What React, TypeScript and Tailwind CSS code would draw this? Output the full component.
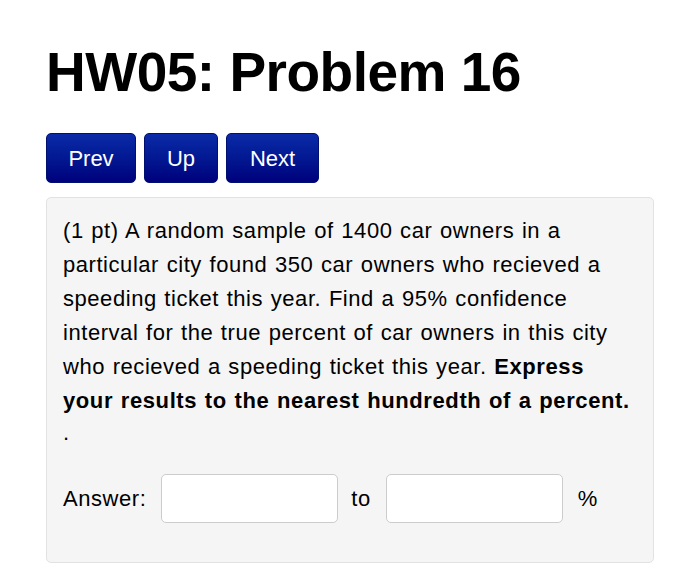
export default function App() {
  return (
    <div
      className="min-h-[580px] bg-white px-[46px] pt-[42px] text-black"
      style={{ fontFamily: '"Liberation Sans", Arial, sans-serif' }}
    >
      <h1 className="text-[55px] font-bold leading-[60px] tracking-[-0.5px]">HW05: Problem 16</h1>

      <div className="mt-[31px] flex gap-[8px]">
        <button className="h-[50px] w-[90px] rounded-[5px] border border-[#001070] bg-gradient-to-b from-[#0c2aa8] to-[#00007c] text-[22px] text-white">
          Prev
        </button>
        <button className="h-[50px] w-[74px] rounded-[5px] border border-[#001070] bg-gradient-to-b from-[#0c2aa8] to-[#00007c] text-[22px] text-white">
          Up
        </button>
        <button className="h-[50px] w-[93px] rounded-[5px] border border-[#001070] bg-gradient-to-b from-[#0c2aa8] to-[#00007c] text-[22px] text-white">
          Next
        </button>
      </div>

      <div className="mt-[14px] w-[608px] rounded-[5px] border border-[#e2e2e2] bg-[#f5f5f5] px-[16px] pt-[16px] pb-[39px] text-[22px] leading-[34px] tracking-[0.55px] [word-spacing:1px]">
        <p className="whitespace-nowrap">
          (1 pt) A random sample of 1400 car owners in a
          <br />
          particular city found 350 car owners who recieved a
          <br />
          speeding ticket this year. Find a 95% confidence
          <br />
          interval for the true percent of car owners in this city
          <br />
          who recieved a speeding ticket this year. <b className="tracking-[0.6px]">Express</b>
          <br />
          <b className="tracking-[0.6px]">your results to the nearest hundredth of a percent.</b>
        </p>
        <p className="-mt-[2px]">.</p>
        <div className="mt-[24px] flex items-center">
          <span>Answer:</span>
          <input className="ml-[15px] h-[49px] w-[177px] rounded-[5px] border border-[#cccccc] bg-white" />
          <span className="ml-[13px] mr-[15px]">to</span>
          <input className="h-[49px] w-[177px] rounded-[5px] border border-[#cccccc] bg-white" />
          <span className="ml-[15px]">%</span>
        </div>
      </div>
    </div>
  );
}
